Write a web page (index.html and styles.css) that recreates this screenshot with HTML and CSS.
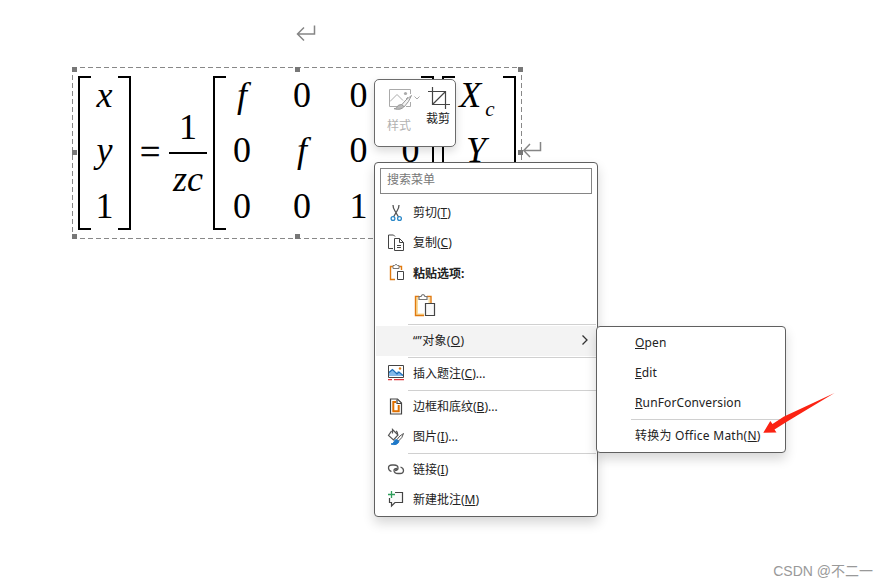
FILE: index.html
```html
<!DOCTYPE html>
<html lang="zh-CN">
<head>
  <meta charset="utf-8">
  <title>Office Math</title>
  <link rel="stylesheet" href="styles.css">
</head>
<body>

<div class="page">
  <div class="line first">
    <svg class="mark" width="20" height="18" viewBox="0 0 20 18"><path d="M18.500 1.500v8.500H2M8 3.500L1.500 10 8 16.500"/></svg>
  </div>

  <div class="line">
    <div class="equation">
      <div class="matrix vector">
        <i>x</i>
        <i>y</i>
        <span>1</span>
      </div>
      <span class="equals">=</span>
      <div class="fraction">
        <span class="top">1</span>
        <i class="bottom">zc</i>
      </div>
      <div class="matrix wide">
        <i>f</i><span>0</span><span>0</span><span></span>
        <span>0</span><i>f</i><span>0</span><span class="last">0</span>
        <span>0</span><span>0</span><span>1</span><span></span>
      </div>
      <div class="matrix coords">
        <i>X<sub>c</sub></i>
        <i class="y">Y</i>
      </div>
      <!-- selection frame -->
      <svg class="frame" width="451" height="172" viewBox="0 0 451 172">
        <path class="dashes" d="M0 .5H451M0 171.500H451M.5 0V172M449.500 0V172"/>
        <path class="handles" d="M0 0h5v5h-5zM223 0h5v5h-5zM446 0h5v5h-5zM0 83h5v5h-5zM446 83h5v5h-5zM0 167h5v5h-5zM223 167h5v5h-5zM446 167h5v5h-5z"/>
      </svg>
    </div>
    <svg class="mark after" width="20" height="18" viewBox="0 0 20 18"><path d="M17.500 1v8.500H1M7 3L.7 9.500 7 16"/></svg>
  </div>
</div>

<div class="toolbar">
  <div class="tool disabled">
    <svg width="34" height="26" viewBox="0 0 34 26">
      <path d="M21.500 7V2.500H.5v17h8M21.500 15v4.500H17M1 14.500l7-7 6 6M17 12l2-2" fill="none" stroke="#aaa"/>
      <circle cx="16.500" cy="6.500" r="1.600" fill="#aaa"/>
      <path d="M22.500 8.500q-6 4-10 9.500l2.500 2q5-5 7.500-11.500z" fill="#f4f4f4" stroke="#999"/>
      <path d="M12.500 17.500q-4 0-4.500 3-1 1-3 1.200 7 2 10-2.200z" fill="#bbb" stroke="#999"/>
      <path d="M25.500 9.500l2.500 2.500 2.500-2.500" fill="none" stroke="#aaa"/>
    </svg>
    <span>样式</span>
  </div>
  <div class="tool crop">
    <svg width="24" height="24" viewBox="0 0 24 24"><path d="M1 5.500h17.500V23M5.500 1v17.500H23M5.500 18.500L18.500 5.500" fill="none" stroke="#444" stroke-width="1.200"/></svg>
    <span>裁剪</span>
  </div>
</div>

<div class="menu context">
  <input class="search" type="text" placeholder="搜索菜单">

  <div class="item">
    <svg class="icon" viewBox="0 0 18 18"><path d="M6 1q0 3 2 6l3.500 6M12 1q0 3-2 6l-3.500 6" fill="none" stroke="#555" stroke-width="1.300"/><circle cx="6" cy="14.500" r="1.900" fill="none" stroke="#2b88c8" stroke-width="1.300"/><circle cx="12.500" cy="14.500" r="1.900" fill="none" stroke="#2b88c8" stroke-width="1.300"/></svg>
    <span>剪切(<u>T</u>)</span>
  </div>
  <div class="item">
    <svg class="icon" viewBox="0 0 18 18"><path d="M6 14.500H1.500v-13.500h5l1.500 1.500M7.500 4.500h5l4 4v8h-9zM12.500 4.500v4h4M10 11.500h4M10 13.500h4" fill="none" stroke="#444"/></svg>
    <span>复制(<u>C</u>)</span>
  </div>
  <div class="item heading">
    <svg class="icon" viewBox="0 0 18 18"><path d="M8 16.500H3.500v-13H6M12 3.500h2.500V7" fill="none" stroke="#e07a10" stroke-width="1.400"/><path d="M6 5.500v-3h1.500q1.500-2.500 3 0H12v3z" fill="#fff" stroke="#777"/><path d="M10.500 8.500h6v8h-6z" fill="#fff" stroke="#444"/></svg>
    <span>粘贴选项:</span>
  </div>
  <div class="paste">
    <svg width="22" height="24" viewBox="0 0 22 24"><path d="M3 4.500v17h7M15.500 5v5" fill="none" stroke="#fbdc9a" stroke-width="2"/><path d="M10 22.500H1.500v-19H5M13 3.500h4V10" fill="none" stroke="#e07a10" stroke-width="1.400"/><path d="M5 6.500v-3h2q2-4 4 0h2v3z" fill="#fff" stroke="#777" stroke-width="1.200"/><path d="M11.500 10.500h9v12h-9z" fill="#fafafa" stroke="#444" stroke-width="1.200"/></svg>
  </div>
  <div class="separator"></div>
  <div class="item active">
    <span class="object">“”对象(<u>O</u>)</span>
    <svg class="arrow" width="8" height="12" viewBox="0 0 8 12"><path d="M1.500 1.500L6 6l-4.500 4.500" fill="none" stroke="#333" stroke-width="1.300"/></svg>
  </div>
  <div class="separator"></div>
  <div class="item">
    <svg class="icon" viewBox="0 0 18 18"><path d="M2 11V7l3-3 4 4 2-2 5 4v1H2z" fill="#83b9ea"/><path d="M2 7.500l3.500-3L10 9l2-2 4 3.500" fill="none" stroke="#1e6fb8" stroke-width="1.200"/><path d="M1.500 .5h15v12h-15z" fill="none" stroke="#444"/><circle cx="13" cy="3.500" r="1.200" fill="#e07a10"/><path d="M1 14h4v1.200H1zM7 14h10v1.200H7z" fill="#e0393e"/></svg>
    <span>插入题注(<u>C</u>)...</span>
  </div>
  <div class="separator"></div>
  <div class="item">
    <svg class="icon" viewBox="0 0 18 18"><path d="M3.500 1h7l4 4v11h-11z" fill="#fff" stroke="#444" stroke-width="1.200"/><path d="M9 4H6.300v9.200h5.400V7" fill="none" stroke="#e07000" stroke-width="2"/><path d="M10 1.500V5.500h4.500" fill="none" stroke="#444" stroke-width="1.200"/></svg>
    <span>边框和底纹(<u>B</u>)...</span>
  </div>
  <div class="item">
    <svg class="icon" viewBox="0 0 18 18"><path d="M4.500 3L1.500 7.500l5 4.500 4.500-5L5.500 1.500v4M9 3q2 1 1.500 5" fill="none" stroke="#555" stroke-width="1.200"/><path d="M16.500 5.500q-4 2-6.500 6l1.500 1.500q4-3 5-7.500z" fill="#fff" stroke="#555"/><path d="M9.500 11.500q-2 0-2.500 2.500-1 2-3 2 6 2 8-2.500z" fill="#1e78c8" stroke="#1e78c8"/></svg>
    <span>图片(<u>I</u>)...</span>
  </div>
  <div class="separator"></div>
  <div class="item">
    <svg class="icon" viewBox="0 0 18 18"><path d="M4.500 10.500Q1.500 9.500 1.500 7 1.500 4 5 4h2q4 0 4 3 0 2.500-3 2.500M13.500 6Q16.500 7 16.500 9.500 16.500 12.500 13 12.500h-2q-4 0-4-3Q7 7.500 10 7.500" fill="none" stroke="#555" stroke-width="1.300"/></svg>
    <span>链接(<u>I</u>)</span>
  </div>
  <div class="item">
    <svg class="icon" viewBox="0 0 18 18"><path d="M8 1.500h7.500v10H8L4.500 15v-3.500h-2V7" fill="#fafafa" stroke="#444" stroke-width="1.200"/><path d="M4.500 0v7M1 3.500h7" stroke="#2f9e5b" stroke-width="1.300"/></svg>
    <span>新建批注(<u>M</u>)</span>
  </div>
</div>

<div class="menu submenu">
  <div class="item"><span><u>O</u>pen</span></div>
  <div class="item"><span><u>E</u>dit</span></div>
  <div class="item"><span><u>R</u>unForConversion</span></div>
  <div class="separator"></div>
  <div class="item"><span class="convert">转换为 Office Math(<u>N</u>)</span></div>
</div>

<svg class="pointer" width="74" height="44" viewBox="0 0 74 44"><path d="M72.500 0L22 23.500 10.500 31 8.300 28 1.300 39.700 14.500 39.500 12.500 36.500 26 28z" fill="#fb2313"/></svg>

<div class="watermark">CSDN @不二一</div>

</body>
</html>
```
FILE: styles.css
```css
body {
  margin: 0;
  height: 587px;
  position: relative;
  overflow: hidden;
  background: #fff;
  font-family: "Noto Sans", "Noto Sans CJK SC", sans-serif;
  font-size: 12px;
  color: #222;
}
.page {
  padding: 24px 0 0 72px;
}
.line {
  display: flex;
  align-items: center;
}
.line.first {
  height: 18px;
  padding-left: 224px;
  margin-bottom: 25px;
}
.mark path {
  fill: none;
  stroke: #858585;
  stroke-width: 1.5;
}
.mark.after {
  margin-bottom: 6px;
}

/* equation */
.equation {
  position: relative;
  display: flex;
  box-sizing: border-box;
  width: 451px;
  height: 172px;
  padding: 9px 7px 9px 6px;
  font-family: "Liberation Serif", serif;
  font-size: 36px;
  line-height: 38px;
  color: #000;
}
.matrix {
  display: grid;
  grid-template-rows: 38px 39px 38px;
  row-gap: 17px;
  justify-items: center;
  box-sizing: border-box;
  height: 154px;
  border-left: 2px solid #000;
  border-right: 2px solid #000;
  background: linear-gradient(#000, #000) 0 0 / 11px 2px no-repeat,
    linear-gradient(#000, #000) 100% 0 / 11px 2px no-repeat,
    linear-gradient(#000, #000) 0 100% / 11px 2px no-repeat,
    linear-gradient(#000, #000) 100% 100% / 11px 2px no-repeat;
}
.vector {
  width: 53px;
}
.equals {
  width: 20px;
  margin: 57px 9px 0;
  -webkit-text-stroke: 0.5px #000;
}
.fraction {
  display: flex;
  flex-direction: column;
  width: 38px;
  margin-right: 6px;
  padding-top: 32px;
  text-align: center;
}
.fraction .top {
  height: 44px;
  border-bottom: 2px solid #000;
}
.fraction .bottom {
  padding-top: 6px;
}
.wide {
  width: 221px;
  margin-right: 8px;
  grid-template-columns: 54px 66px 47px 50px;
}
.wide .last {
  padding-left: 7px;
}
.coords {
  width: 74px;
}
.coords i {
  margin-left: -4px;
}
.coords .y {
  margin-left: -6px;
}
.coords sub {
  font-size: 21px;
  line-height: 0;
  vertical-align: -9px;
  margin-left: 4px;
}
.frame {
  position: absolute;
  left: 0;
  top: 0;
}
.dashes {
  stroke: #888;
  stroke-dasharray: 5 3;
}
.handles {
  fill: #777;
}

/* floating toolbar */
.toolbar {
  position: absolute;
  left: 374px;
  top: 79px;
  display: flex;
  box-sizing: border-box;
  width: 82px;
  height: 68px;
  padding: 7px 0 0 14px;
  border: 1px solid #6b6b6b;
  border-radius: 5px;
  background: #fff;
  box-shadow: 0 4px 10px rgba(0, 0, 0, 0.15);
}
.tool {
  display: flex;
  flex-direction: column;
  width: 36px;
  line-height: 18px;
}
.tool.disabled {
  color: #b1b1b1;
}
.tool.disabled span {
  margin-top: 4px;
  margin-left: -2px;
}
.crop {
  width: 28px;
  margin-top: -1px;
  margin-left: 2px;
}
.crop span {
  margin-left: -1px;
}

/* menus */
.menu {
  position: absolute;
  box-sizing: border-box;
  border: 1px solid #606060;
  border-radius: 4px;
  background: #fff;
  box-shadow: 0 6px 12px rgba(0, 0, 0, 0.16);
}
.context {
  left: 374px;
  top: 162px;
  width: 224px;
  height: 355px;
  padding: 5px 1px 0;
}
.search {
  display: block;
  box-sizing: border-box;
  width: 212px;
  height: 26px;
  margin: 0 0 4px 4px;
  padding: 0 6px 3px;
  border: 1px solid #858585;
  font: inherit;
}
.search::placeholder {
  color: #777;
}
.item {
  display: flex;
  align-items: center;
  height: 30px;
  padding-left: 37px;
  line-height: 18px;
}
.icon {
  width: 18px;
  height: 18px;
  margin: 0 8px 0 -26px;
}
.heading {
  height: 31px;
  font-weight: bold;
}
.heading .icon {
  margin-bottom: 4px;
}
.paste {
  height: 34px;
  padding: 4px 0 0 38px;
  box-sizing: border-box;
}
.active {
  background: #f3f3f3;
}
.object {
  letter-spacing: 0.3px;
}
.arrow {
  margin-left: auto;
  margin-right: 7px;
  margin-bottom: 2px;
}
.separator {
  height: 1px;
  margin: 1px 0 1px 32px;
  background: #d0d0d0;
}
.submenu {
  left: 596px;
  top: 326px;
  width: 190px;
  height: 127px;
  padding: 1px 1px 0;
}
.submenu .item {
  letter-spacing: 0.12px;
}
.submenu .convert {
  letter-spacing: 0.25px;
}
.submenu .separator {
  margin-left: 33px;
}

.pointer {
  position: absolute;
  left: 762px;
  top: 393px;
}
.watermark {
  position: absolute;
  right: 15px;
  bottom: 7px;
  font-family: "Liberation Sans", "Noto Sans CJK SC", sans-serif;
  font-size: 14px;
  color: #999;
}
```
